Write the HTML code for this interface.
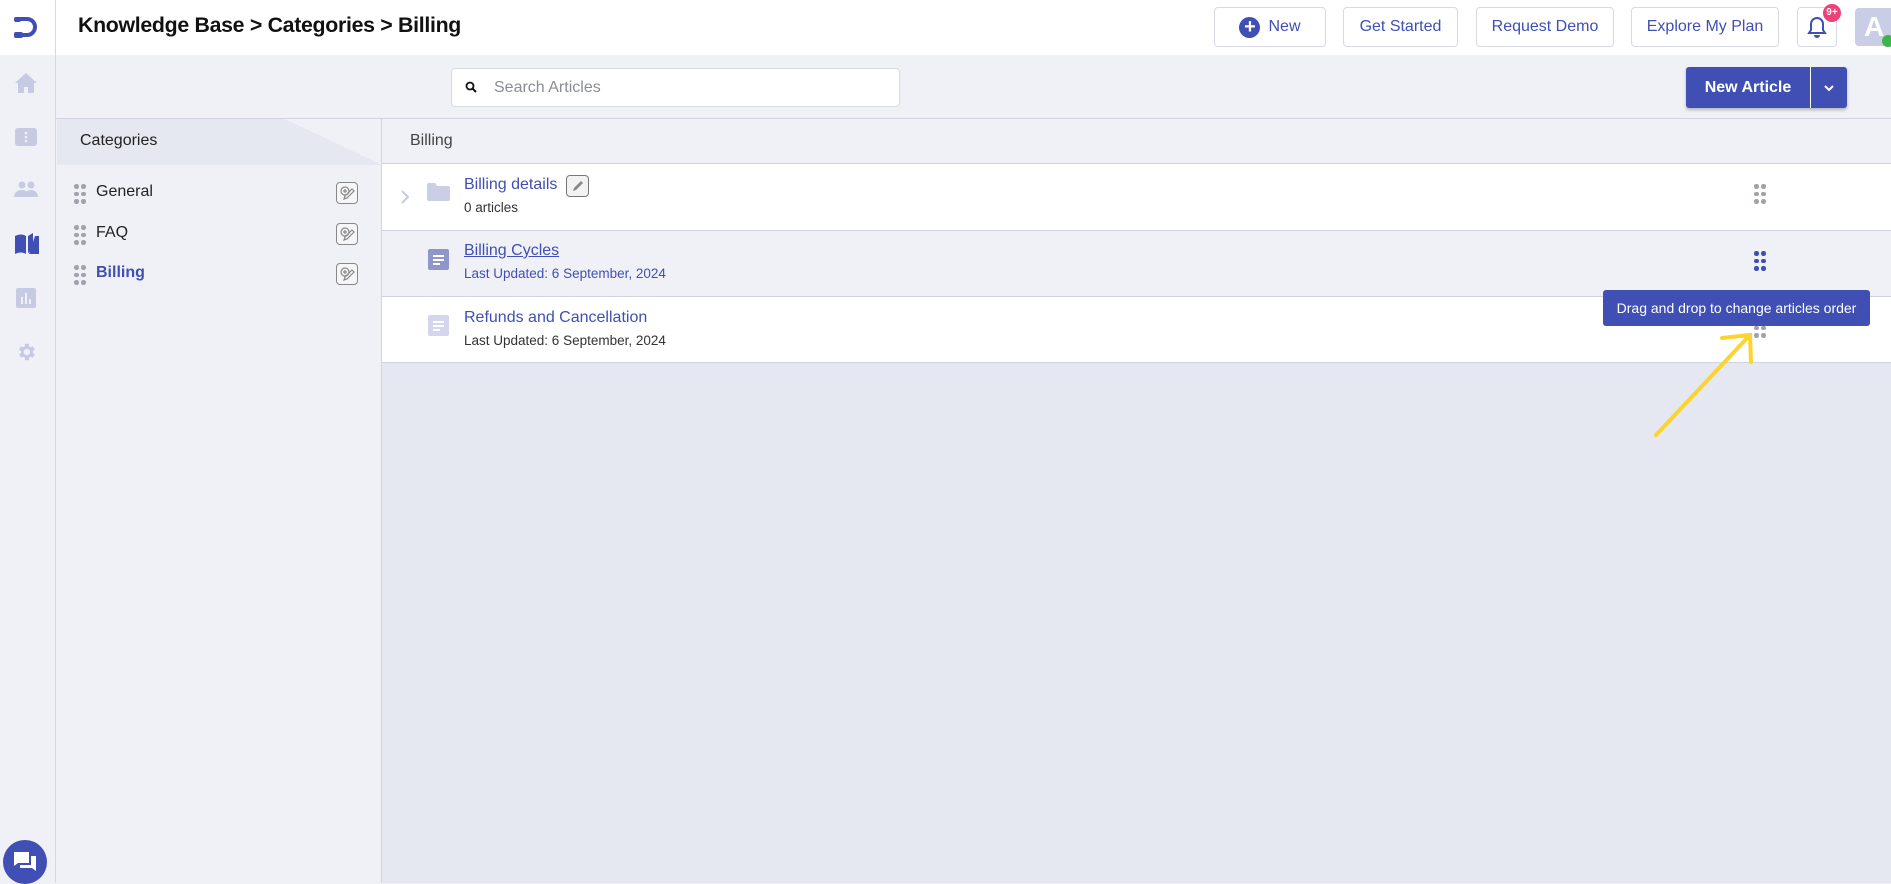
<!DOCTYPE html>
<html><head><meta charset="utf-8"><style>
*{box-sizing:border-box;margin:0;padding:0}
body{width:1891px;height:883px;overflow:hidden;background:#f0f1f7;font-family:"Liberation Sans",sans-serif;position:relative}
.abs{position:absolute}
.hdr{left:0;top:0;width:1891px;height:55px;background:#fff}
.side{left:0;top:0;width:56px;height:883px;border-right:1px solid #d6d8e2}
.title{left:78px;top:13px;font-size:21.3px;font-weight:bold;color:#111;letter-spacing:-0.3px}
.btn{top:7px;height:40px;border:1px solid #d8dae3;border-radius:4px;background:#fff;color:#3f4fb3;font-size:16px;display:flex;align-items:center;justify-content:center}
.search{left:451px;top:68px;width:449px;height:39px;background:#fff;border:1px solid #d8dae3;border-radius:4px}
.lp{left:56px;top:118px;width:326px;height:765px;border-right:1px solid #d0d3e0;border-top:1px solid #d0d3e0}
.rp{left:382px;top:118px;width:1509px;height:765px;background:#e5e8f1;border-top:1px solid #d0d3e0}
.row{left:382px;width:1509px;height:67px;border-bottom:1px solid #d0d3e0}
.t1{font-size:16px;color:#3f4fb3}
.t2{font-size:13.5px;color:#3f4fb3}
.dots{display:grid;grid-template-columns:4px 4px;gap:3px 3px}
.dots i{width:4.5px;height:4.5px;border-radius:50%;background:#a0a3ad;display:block}
.eb{width:22px;height:22px;border:1.5px solid #888;border-radius:4px;background:#f6f6f8}
.eb svg{position:absolute;left:2px;top:2px}
</style></head><body>
<div class="abs hdr"></div>
<div class="abs side">
<svg class="abs" style="left:13px;top:15px" width="26" height="24" viewBox="0 0 26 24"><path d="M4 4H14A8 8 0 0 1 14 20H8" fill="none" stroke="#3f4fb3" stroke-width="4"/><rect x="1" y="2" width="7" height="5" rx="2" fill="#3f4fb3"/><rect x="1" y="17" width="9" height="6" rx="2" fill="#3f4fb3"/></svg>
<svg class="abs" style="left:14px;top:72px" width="24" height="22" viewBox="0 0 24 22"><path d="M12 1L1 11h3v10h6v-6h4v6h6V11h3z" fill="#c6cae2"/></svg>
<svg class="abs" style="left:15px;top:128px" width="22" height="18"><rect width="22" height="18" rx="3" fill="#c6cae2"/><circle cx="11" cy="5" r="1.3" fill="#f0f1f7"/><circle cx="11" cy="9" r="1.3" fill="#f0f1f7"/><circle cx="11" cy="13" r="1.3" fill="#f0f1f7"/></svg>
<svg class="abs" style="left:14px;top:181px" width="24" height="16"><circle cx="8" cy="4" r="3.5" fill="#c6cae2"/><circle cx="17" cy="4" r="3.5" fill="#c6cae2"/><path d="M0 16c0-5 4-7 8-7s7 2 7 7z M10 16c0-5 4-7 7-7s7 2 7 7z" fill="#c6cae2"/></svg>
<svg class="abs" style="left:14px;top:233px" width="26" height="22" viewBox="0 0 26 22"><path d="M1 3c4-2 8-2 11 0v18c-3-2-7-2-11 0z" fill="#3f4fb3"/><path d="M14 3l5-3v16l-5 4z" fill="#3f4fb3"/><path d="M21 3h4v18h-10z" fill="#3f4fb3"/></svg>
<svg class="abs" style="left:16px;top:288px" width="20" height="20"><rect width="20" height="20" rx="2" fill="#c6cae2"/><rect x="5" y="9" width="2" height="7" fill="#f0f1f7"/><rect x="9" y="5" width="2" height="11" fill="#f0f1f7"/><rect x="13" y="11" width="2" height="5" fill="#f0f1f7"/></svg>
<svg class="abs" style="left:15px;top:341px" width="22" height="22" viewBox="0 0 24 24"><path d="M19.4 13a7.5 7.5 0 0 0 0-2l2.1-1.6-2-3.5-2.5 1a7.5 7.5 0 0 0-1.7-1L15 3h-4l-.4 2.9a7.5 7.5 0 0 0-1.7 1l-2.5-1-2 3.5L6.6 11a7.5 7.5 0 0 0 0 2l-2.1 1.6 2 3.5 2.5-1a7.5 7.5 0 0 0 1.7 1L11 21h4l.4-2.9a7.5 7.5 0 0 0 1.7-1l2.5 1 2-3.5zM13 15.5a3.5 3.5 0 1 1 0-7 3.5 3.5 0 0 1 0 7z" fill="#c6cae2"/></svg>
<div class="abs" style="left:3px;top:840px;width:44px;height:44px;border-radius:50%;background:#3f4fb3"></div>
<svg class="abs" style="left:13px;top:851px" width="26" height="22"><path d="M1 1h15v11H5l-4 3z" fill="#fff"/><path d="M18 5h5v15l-4-3H7v-3h11z" fill="#fff"/></svg>
</div>
<div class="abs title">Knowledge Base &gt; Categories &gt; Billing</div>
<div class="abs btn" style="left:1214px;width:112px"><span style="display:inline-block;width:21px;height:21px;border-radius:50%;background:#3f4fb3;color:#fff;font-size:20px;line-height:20px;text-align:center;margin-right:8px;font-weight:bold">+</span>New</div>
<div class="abs btn" style="left:1343px;width:115px">Get Started</div>
<div class="abs btn" style="left:1476px;width:138px">Request Demo</div>
<div class="abs btn" style="left:1631px;width:148px">Explore My Plan</div>
<div class="abs btn" style="left:1797px;width:40px"><svg width="20" height="22" viewBox="0 0 20 22"><path d="M10 2a6 6 0 0 0-6 6v6l-2 3h16l-2-3V8a6 6 0 0 0-6-6z" fill="none" stroke="#3f4fb3" stroke-width="2"/><path d="M7 19a3 3 0 0 0 6 0" fill="#3f4fb3"/></svg></div>
<div class="abs" style="left:1823px;top:4px;width:18px;height:18px;border-radius:50%;background:#f0407a;color:#fff;font-size:10px;font-weight:bold;text-align:center;line-height:18px">9+</div>
<div class="abs" style="left:1855px;top:8px;width:40px;height:38px;background:#c9cde6;border-radius:4px;color:#fff;font-size:28px;font-weight:bold;padding-left:9px;line-height:38px">A</div>
<div class="abs" style="left:1882px;top:35px;width:12px;height:12px;border-radius:50%;background:#3cb54a"></div>
<div class="abs search"><svg class="abs" style="left:13px;top:12px" width="12" height="13"><circle cx="5" cy="5" r="3.5" fill="none" stroke="#111" stroke-width="1.8"/><path d="M7.5 7.5L11 11" stroke="#111" stroke-width="2"/></svg><span class="abs" style="left:42px;top:10px;font-size:16px;color:#8a8d96">Search Articles</span></div>
<div class="abs" style="left:1686px;top:67px;width:161px;height:41px;background:#3f4fb3;border-radius:3px;box-shadow:0 2px 3px rgba(0,0,0,.25)"></div>
<div class="abs" style="left:1686px;top:67px;width:124px;height:41px;color:#fff;font-weight:bold;font-size:16px;text-align:center;line-height:41px">New Article</div>
<div class="abs" style="left:1810px;top:67px;width:1px;height:41px;background:#fff"></div>
<svg class="abs" style="left:1824px;top:84px" width="10" height="8"><path d="M1 2l4 4 4-4" stroke="#fff" stroke-width="2" fill="none"/></svg>
<div class="abs lp"></div>
<svg class="abs" style="left:57px;top:119px" width="325" height="46"><path d="M0 0H228L325 46H0z" fill="#e5e7f1"/></svg>
<div class="abs" style="left:80px;top:132px;font-size:16px;color:#222">Categories</div>
<div class="abs dots" style="left:74px;top:184px"><i></i><i></i><i></i><i></i><i></i><i></i></div>
<div class="abs" style="left:96px;top:183px;font-size:16px;color:#222">General</div>
<div class="abs eb" style="left:336px;top:182px"><svg width="16" height="16"><circle cx="6" cy="6" r="4" fill="none" stroke="#888" stroke-width="1.2"/><path d="M6 4v4M4 6h4M5 14l1-3 7-7 2 2-7 7z" stroke="#888" stroke-width="1.2" fill="none"/></svg></div>
<div class="abs dots" style="left:74px;top:225px"><i></i><i></i><i></i><i></i><i></i><i></i></div>
<div class="abs" style="left:96px;top:224px;font-size:16px;color:#222">FAQ</div>
<div class="abs eb" style="left:336px;top:223px"><svg width="16" height="16"><circle cx="6" cy="6" r="4" fill="none" stroke="#888" stroke-width="1.2"/><path d="M6 4v4M4 6h4M5 14l1-3 7-7 2 2-7 7z" stroke="#888" stroke-width="1.2" fill="none"/></svg></div>
<div class="abs dots" style="left:74px;top:265px"><i></i><i></i><i></i><i></i><i></i><i></i></div>
<div class="abs" style="left:96px;top:264px;font-size:16px;color:#3f4fb3;font-weight:bold">Billing</div>
<div class="abs eb" style="left:336px;top:263px"><svg width="16" height="16"><circle cx="6" cy="6" r="4" fill="none" stroke="#888" stroke-width="1.2"/><path d="M6 4v4M4 6h4M5 14l1-3 7-7 2 2-7 7z" stroke="#888" stroke-width="1.2" fill="none"/></svg></div>
<div class="abs rp"></div>
<div class="abs" style="left:382px;top:119px;width:1509px;height:45px;background:#f0f1f7;border-bottom:1px solid #d0d3e0"></div>
<div class="abs" style="left:410px;top:132px;font-size:16px;color:#444">Billing</div>
<div class="abs row" style="top:164px;background:#fff"></div>
<div class="abs row" style="top:231px;background:#f0f1f7;height:66px"></div>
<div class="abs row" style="top:297px;background:#fff;height:66px"></div>
<svg class="abs" style="left:400px;top:190px" width="10" height="14"><path d="M2 1l6 6-6 6" stroke="#c6cae2" stroke-width="2" fill="none"/></svg>
<svg class="abs" style="left:427px;top:183px" width="23" height="18"><path d="M0 2a2 2 0 0 1 2-2h6l2 3h11a2 2 0 0 1 2 2v11a2 2 0 0 1-2 2H2a2 2 0 0 1-2-2z" fill="#cbcfe6"/></svg>
<div class="abs t1" style="left:464px;top:176px">Billing details</div>
<div class="abs" style="left:566px;top:175px;width:23px;height:22px;border:1.5px solid #777;border-radius:4px;background:#f2f2f2"></div>
<svg class="abs" style="left:571px;top:179px" width="14" height="14"><path d="M2 12l1-3 7-7 2 2-7 7z" fill="#888"/></svg>
<div class="abs" style="left:464px;top:200px;font-size:13.5px;color:#333">0 articles</div>
<svg class="abs" style="left:428px;top:249px" width="21" height="21"><rect width="21" height="21" rx="2" fill="#8f96c9"/><rect x="5" y="6" width="11" height="2" fill="#fff"/><rect x="5" y="10" width="11" height="2" fill="#fff"/><rect x="5" y="14" width="7" height="2" fill="#fff"/></svg>
<div class="abs t1" style="left:464px;top:242px;text-decoration:underline">Billing Cycles</div>
<div class="abs t2" style="left:464px;top:266px">Last Updated: 6 September, 2024</div>
<svg class="abs" style="left:428px;top:315px" width="21" height="21"><rect width="21" height="21" rx="2" fill="#d3d6ec"/><rect x="5" y="6" width="11" height="2" fill="#fff"/><rect x="5" y="10" width="11" height="2" fill="#fff"/><rect x="5" y="14" width="7" height="2" fill="#fff"/></svg>
<div class="abs t1" style="left:464px;top:309px">Refunds and Cancellation</div>
<div class="abs t2" style="left:464px;top:333px;color:#333">Last Updated: 6 September, 2024</div>
<div class="abs dots" style="left:1754px;top:184px"><i></i><i></i><i></i><i></i><i></i><i></i></div>
<div class="abs dots" style="left:1754px;top:251px"><i style="background:#3f4fb3"></i><i style="background:#3f4fb3"></i><i style="background:#3f4fb3"></i><i style="background:#3f4fb3"></i><i style="background:#3f4fb3"></i><i style="background:#3f4fb3"></i></div>
<div class="abs dots" style="left:1754px;top:318px"><i></i><i></i><i></i><i></i><i></i><i></i></div>
<div class="abs" style="left:1603px;top:290px;width:267px;height:36px;background:#3f4fb3;border-radius:3px;color:#fff;font-size:14px;text-align:center;line-height:36px">Drag and drop to change articles order</div>
<svg class="abs" style="left:1640px;top:325px" width="120" height="130"><path d="M16 110L110 10M82 13L110 10L111 37" stroke="#fcd430" stroke-width="4" fill="none" stroke-linecap="round"/></svg>
</body></html>
